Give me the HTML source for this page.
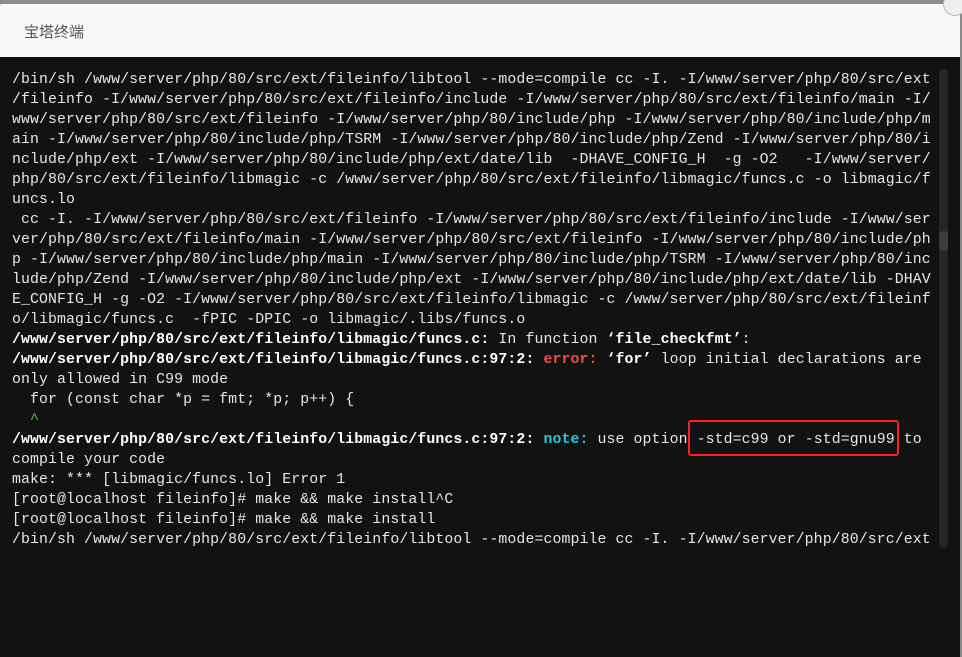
<!DOCTYPE html>
<html><head><meta charset="utf-8"><style>
html,body{margin:0;padding:0;width:962px;height:657px;overflow:hidden;background:#8a8a8a;}
.top{position:absolute;left:0;top:0;width:962px;height:4px;background:#8d8d8d;}
.hdr{position:absolute;left:0;top:4px;width:960px;height:53px;background:#f8f8f8;border-radius:2px 2px 0 0;}
.hdr span{position:absolute;left:24px;top:17px;font:15px "Liberation Sans","Noto Sans CJK SC",sans-serif;color:#555;}
.term{position:absolute;left:0;top:57px;width:960px;height:600px;background:#121212;}
pre{position:absolute;left:12px;top:13px;margin:0;font:14.85px/20px "Liberation Mono","DejaVu Sans Mono",monospace;letter-spacing:0.1px;color:#e6e6e6;white-space:pre;}
b{color:#fff;}
.r{color:#f14c4c;font-weight:bold}
.c{color:#29c7d8;font-weight:bold}
.g{color:#4ec94e}
.track{position:absolute;left:939px;top:12px;width:9px;height:479px;background:#262626;border-radius:4px;}
.thumb{position:absolute;left:939px;top:174px;width:9px;height:20px;background:#3c3c3c;border-radius:4px;}
.box{position:absolute;left:688px;top:420px;width:207px;height:32px;border:2px solid #ff2020;border-radius:3px;}
.close{position:absolute;left:943px;top:-8px;width:22px;height:22px;border-radius:50%;background:#eee;border:1px solid #bbb;}
</style></head><body>
<div class="top"></div>
<div class="hdr"><span>宝塔终端</span></div>
<div class="close"></div>
<div class="term">
<div class="track"></div><div class="thumb"></div>
<pre>/bin/sh /www/server/php/80/src/ext/fileinfo/libtool --mode=compile cc -I. -I/www/server/php/80/src/ext
/fileinfo -I/www/server/php/80/src/ext/fileinfo/include -I/www/server/php/80/src/ext/fileinfo/main -I/
www/server/php/80/src/ext/fileinfo -I/www/server/php/80/include/php -I/www/server/php/80/include/php/m
ain -I/www/server/php/80/include/php/TSRM -I/www/server/php/80/include/php/Zend -I/www/server/php/80/i
nclude/php/ext -I/www/server/php/80/include/php/ext/date/lib  -DHAVE_CONFIG_H  -g -O2   -I/www/server/
php/80/src/ext/fileinfo/libmagic -c /www/server/php/80/src/ext/fileinfo/libmagic/funcs.c -o libmagic/f
uncs.lo
 cc -I. -I/www/server/php/80/src/ext/fileinfo -I/www/server/php/80/src/ext/fileinfo/include -I/www/ser
ver/php/80/src/ext/fileinfo/main -I/www/server/php/80/src/ext/fileinfo -I/www/server/php/80/include/ph
p -I/www/server/php/80/include/php/main -I/www/server/php/80/include/php/TSRM -I/www/server/php/80/inc
lude/php/Zend -I/www/server/php/80/include/php/ext -I/www/server/php/80/include/php/ext/date/lib -DHAV
E_CONFIG_H -g -O2 -I/www/server/php/80/src/ext/fileinfo/libmagic -c /www/server/php/80/src/ext/fileinf
o/libmagic/funcs.c  -fPIC -DPIC -o libmagic/.libs/funcs.o
<b>/www/server/php/80/src/ext/fileinfo/libmagic/funcs.c:</b> In function <b>‘file_checkfmt’</b>:
<b>/www/server/php/80/src/ext/fileinfo/libmagic/funcs.c:97:2:</b> <span class="r">error: </span><b>‘for’</b> loop initial declarations are
only allowed in C99 mode
  for (const char *p = fmt; *p; p++) {
  <span class="g">^</span>
<b>/www/server/php/80/src/ext/fileinfo/libmagic/funcs.c:97:2:</b> <span class="c">note: </span>use option -std=c99 or -std=gnu99 to
compile your code
make: *** [libmagic/funcs.lo] Error 1
[root@localhost fileinfo]# make &amp;&amp; make install^C
[root@localhost fileinfo]# make &amp;&amp; make install
/bin/sh /www/server/php/80/src/ext/fileinfo/libtool --mode=compile cc -I. -I/www/server/php/80/src/ext</pre>
</div>
<div class="box"></div>
</body></html>
